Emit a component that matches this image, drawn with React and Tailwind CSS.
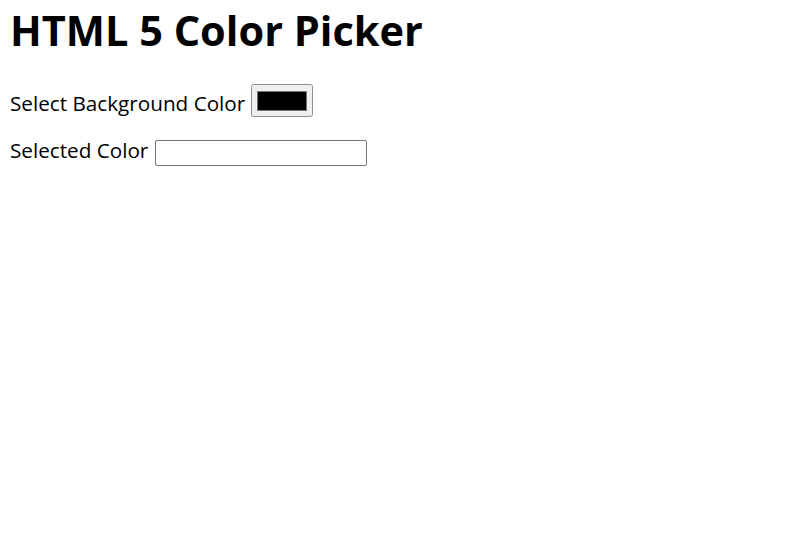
import React from "react";

export default function App() {
  return (
    <div className="min-h-[542px] bg-white pl-[10px] pt-[3px] text-black font-['Open_Sans',sans-serif]">
      <h1 className="text-[41.5px] font-bold leading-[54px]">HTML 5 Color Picker</h1>

      <div className="mt-[27px] flex items-end">
        <span className="w-[241px] shrink-0 text-[20.7px] leading-[28px]">Select Background Color</span>
        <div className="flex h-[33px] w-[62px] items-start rounded-[2.5px] border border-[#8f8f8f] bg-[#efefef] pl-[5px] pt-[6px]">
          <div className="h-[20px] w-[50px] border border-[#767676] bg-black" />
        </div>
      </div>

      <div className="mt-[18px] flex items-end">
        <label className="w-[145px] shrink-0 text-[20.7px] leading-[31px]">Selected Color</label>
        <input
          type="text"
          className="h-[26px] w-[212px] rounded-[2px] border border-[#767676] bg-white px-1 text-[16px] outline-none"
        />
      </div>
    </div>
  );
}
